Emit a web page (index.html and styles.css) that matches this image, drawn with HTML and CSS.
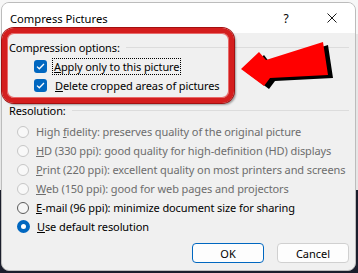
FILE: index.html
```html
<!DOCTYPE html>
<html lang="en">
<head>
  <meta charset="UTF-8" />
  <title>Compress Pictures</title>
  <link rel="stylesheet" href="styles.css">
</head>
<body>

  <div class="dialog">
    <div class="titlebar">
      <span class="title">Compress Pictures</span>
      <span class="help">?</span>
      <span class="close">
        <svg width="10" height="10" viewBox="0 0 10 10"><path d="M0.5 0.5L9.5 9.5M9.5 0.5L0.5 9.5" stroke="#1a1a1a" stroke-width="1"/></svg>
      </span>
    </div>

    <div class="content">
      <div class="group-label">Compression options:</div>
      <div class="check-row">
        <span class="checkbox"><svg width="9" height="7" viewBox="0 0 9 7"><path d="M1 3.6L3.3 5.8L8 1" fill="none" stroke="#fff" stroke-width="1.3"/></svg></span>
        <span class="focus"><u>A</u>pply only to this picture</span>
      </div>
      <div class="check-row">
        <span class="checkbox"><svg width="9" height="7" viewBox="0 0 9 7"><path d="M1 3.6L3.3 5.8L8 1" fill="none" stroke="#fff" stroke-width="1.3"/></svg></span>
        <span><u>D</u>elete cropped areas of pictures</span>
      </div>

      <div class="group-label res">Resolution:</div>
      <div class="radios">
        <div class="radio-row disabled"><span class="radio"></span><span>High <u>f</u>idelity: preserves quality of the original picture</span></div>
        <div class="radio-row disabled"><span class="radio"></span><span><u>H</u>D (330 ppi): good quality for high-definition (HD) displays</span></div>
        <div class="radio-row disabled"><span class="radio"></span><span><u>P</u>rint (220 ppi): excellent quality on most printers and screens</span></div>
        <div class="radio-row disabled"><span class="radio"></span><span><u>W</u>eb (150 ppi): good for web pages and projectors</span></div>
        <div class="radio-row"><span class="radio"></span><span><u>E</u>-mail (96 ppi): minimize document size for sharing</span></div>
        <div class="radio-row"><span class="radio checked"></span><span><u>U</u>se default resolution</span></div>
      </div>

      <div class="buttons">
        <button class="btn default">OK</button>
        <button class="btn">Cancel</button>
      </div>
    </div>
  </div>

  <!-- annotation drawn over the dialog -->
  <div class="callout-box"></div>
  <svg class="callout-arrow" width="100" height="56" viewBox="0 0 100 56">
    <polygon points="11,34 29,17 35,25 93,7 98,40 40,43 34,51" fill="#000"/>
    <polygon points="6,31 24,14 31,22 88,4 93,37 35,40 29,48" fill="#ff0000"/>
  </svg>

</body>
</html>
```

FILE: styles.css
```css
* {
  box-sizing: border-box;
}

body {
  margin: 0;
  height: 273px;
  overflow: hidden;
  position: relative;
  font-family: 'Noto Sans', sans-serif;
  font-size: 11px;
  letter-spacing: -0.1px;
  color: #000;
  background: linear-gradient(#f7f7f7 0, #f7f7f7 34px, #e6e6e6 34px, #e6e6e6 190px, #1b1e2c 190px);
}

.dialog {
  margin: 2px 0 0 1px;
  width: 355px;
  height: 269px;
  border: 1px solid #bcbcbc;
  border-radius: 8px;
  background: #f0f0f0;
  overflow: hidden;
  display: flex;
  flex-direction: column;
}

.titlebar {
  height: 30px;
  flex: none;
  background: #fff;
  display: flex;
  align-items: center;
  padding-left: 8px;
  font-size: 11.2px;
  letter-spacing: 0;
}

.title {
  flex: 1;
}

.help {
  width: 16px;
  text-align: center;
  margin-right: 33px;
  font-size: 12px;
}

.close {
  display: flex;
  margin-right: 18px;
}

.content {
  padding: 5px 6px 0 7px;
}

.group-label {
  display: flex;
  align-items: center;
  gap: 6px;
  line-height: 19px;
  height: 19px;
}

.group-label::after {
  content: "";
  flex: 1;
  height: 1px;
  background: #dcdcdc;
}

.group-label.res {
  margin-top: 6px;
}

.check-row {
  display: flex;
  align-items: center;
  height: 19px;
  padding-left: 25px;
  gap: 8px;
  white-space: nowrap;
}

.checkbox {
  width: 13px;
  height: 13px;
  border-radius: 3px;
  background: #0067c0;
  display: flex;
  align-items: center;
  justify-content: center;
}

.focus {
  outline: 1px dotted #000;
  outline-offset: 0;
  padding: 0 1px;
  margin-left: -2px;
  line-height: 15px;
}

.radios {
  margin-top: 2px;
}

.radio-row {
  display: flex;
  align-items: center;
  height: 19px;
  padding-left: 8px;
  gap: 7px;
  white-space: nowrap;
}

.radio {
  width: 12px;
  height: 12px;
  border-radius: 50%;
  border: 1px solid #5a5a5a;
  background: #f6f6f6;
  flex: none;
}

.radio-row.disabled {
  color: #6d6d6d;
}

.radio-row.disabled .radio {
  border-color: #c6c6c6;
  background: #f8f8f8;
}

.radio.checked {
  border: 4px solid #0067c0;
  background: #fff;
  width: 13px;
  height: 13px;
}

.buttons {
  display: flex;
  justify-content: flex-end;
  gap: 13px;
  margin-top: 7px;
}

.btn {
  width: 72px;
  height: 20px;
  font-family: inherit;
  font-size: 11px;
  background: #fdfdfd;
  border: 1px solid #d0d0d0;
  border-radius: 4px;
  padding: 0;
  color: #000;
}

.btn.default {
  border-color: #0067c0;
}

.callout-box {
  position: absolute;
  left: 2px;
  top: 28px;
  width: 232px;
  height: 75px;
  border: 5px solid #d41e1e;
  border-radius: 12px;
  box-shadow: 0 0 0 1px #a31010, inset 0 0 0 1px #e76a6a, 2px 2px 2px rgba(0, 0, 0, 0.35);
}

.callout-arrow {
  position: absolute;
  left: 235px;
  top: 38px;
}
```
